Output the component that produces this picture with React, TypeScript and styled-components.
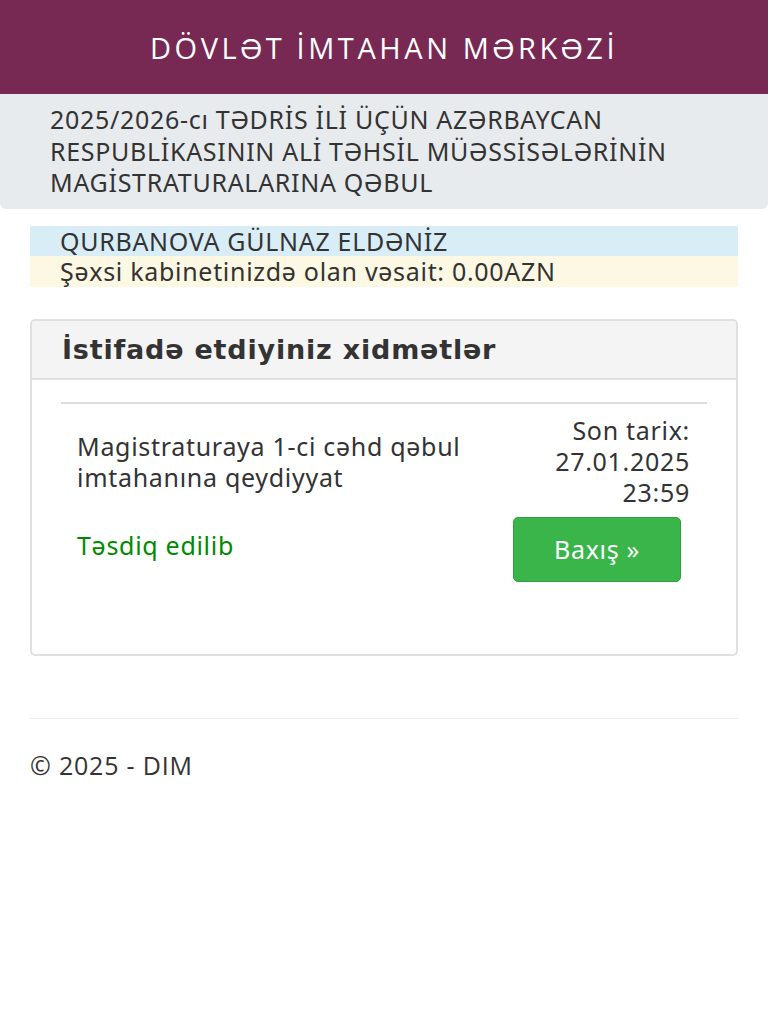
import React from "react";
import styled, { createGlobalStyle } from "styled-components";

const Global = createGlobalStyle`
  html, body { margin: 0; padding: 0; background: #fff; }
  body {
    font-family: "Noto Sans", "Open Sans", sans-serif;
    color: #333;
    font-size: 25px;
    letter-spacing: 0.7px;
  }
  * { box-sizing: border-box; }
`;

const Header = styled.header`
  height: 94px;
  background: #772853;
  display: flex;
  align-items: center;
  justify-content: center;
`;

const Brand = styled.h1`
  margin: 0;
  color: #fff;
  font-family: "Open Sans", sans-serif;
  font-weight: 400;
  font-size: 29px;
  letter-spacing: 3.6px;
`;

const Jumbo = styled.div`
  background: #e8ebee;
  border-radius: 0 0 6px 6px;
  padding: 10px 50px 10px;
`;

const JumboText = styled.p`
  margin: 0;
  font-size: 25px;
  line-height: 31.5px;
  color: #333;
`;

const Container = styled.main`
  padding: 17px 30px 0;
`;

const Alert = styled.div<{ $tone: "info" | "warn" }>`
  background: ${(p) => (p.$tone === "info" ? "#d9edf7" : "#fcf8e3")};
  padding: 0 30px;
  height: 30.5px;
  line-height: 30px;
  white-space: nowrap;
  color: #333;
`;

const Panel = styled.section`
  margin-top: 32px;
  border: 2px solid #e0e0e0;
  border-radius: 5px;
  overflow: hidden;
`;

const PanelHead = styled.div`
  background: #f4f4f4;
  border-bottom: 2px solid #e0e0e0;
  height: 59px;
  padding: 0 30px;
  display: flex;
  align-items: center;
`;

const PanelTitle = styled.h3`
  margin: 0;
  font-family: "DejaVu Sans", "Noto Sans", sans-serif;
  font-size: 27px;
  font-weight: 700;
  letter-spacing: 0.8px;
  color: #333;
`;

const PanelBody = styled.div`
  padding: 22px 29px 72px;
`;

const Rule = styled.hr`
  margin: 0;
  border: 0;
  border-top: 2px solid #dedede;
`;

const Service = styled.div`
  display: grid;
  grid-template-columns: 1fr auto;
  padding: 11px 17px 0 16px;
  column-gap: 20px;
`;

const ServiceName = styled.div`
  line-height: 31px;
  padding-top: 16px;
  color: #333;
`;

const Deadline = styled.div`
  text-align: right;
  line-height: 31px;
  color: #333;
`;

const Status = styled.div`
  color: #008a00;
  align-self: center;
`;

const ActionCell = styled.div`
  display: flex;
  justify-content: flex-end;
  padding-top: 9px;
  padding-right: 9px;
`;

const Button = styled.button`
  width: 168px;
  height: 65px;
  background: #39b54a;
  border: 1px solid #2ea03d;
  border-radius: 5px;
  color: #fff;
  font-family: inherit;
  font-size: 25px;
  letter-spacing: 0.7px;
  cursor: pointer;
`;

const Footer = styled.footer`
  margin-top: 62px;
  border-top: 1px solid #eee;
  padding-top: 29px;
  font-family: "Open Sans", sans-serif;
  letter-spacing: 0.8px;
  color: #333;
`;

export default function App() {
  return (
    <>
      <Global />
      <Header>
        <Brand>DÖVLƏT İMTAHAN MƏRKƏZİ</Brand>
      </Header>
      <Jumbo>
        <JumboText>
          2025/2026-cı TƏDRİS İLİ ÜÇÜN AZƏRBAYCAN RESPUBLİKASININ ALİ TƏHSİL
          MÜƏSSİSƏLƏRİNİN MAGİSTRATURALARINA QƏBUL
        </JumboText>
      </Jumbo>
      <Container>
        <Alert $tone="info">QURBANOVA GÜLNAZ ELDƏNİZ</Alert>
        <Alert $tone="warn">Şəxsi kabinetinizdə olan vəsait: 0.00AZN</Alert>
        <Panel>
          <PanelHead>
            <PanelTitle>İstifadə etdiyiniz xidmətlər</PanelTitle>
          </PanelHead>
          <PanelBody>
            <Rule />
            <Service>
              <ServiceName>Magistraturaya 1-ci cəhd qəbul imtahanına qeydiyyat</ServiceName>
              <Deadline>
                Son tarix:
                <br />
                27.01.2025
                <br />
                23:59
              </Deadline>
              <Status>Təsdiq edilib</Status>
              <ActionCell>
                <Button>Baxış »</Button>
              </ActionCell>
            </Service>
          </PanelBody>
        </Panel>
        <Footer>© 2025 - DIM</Footer>
      </Container>
    </>
  );
}
